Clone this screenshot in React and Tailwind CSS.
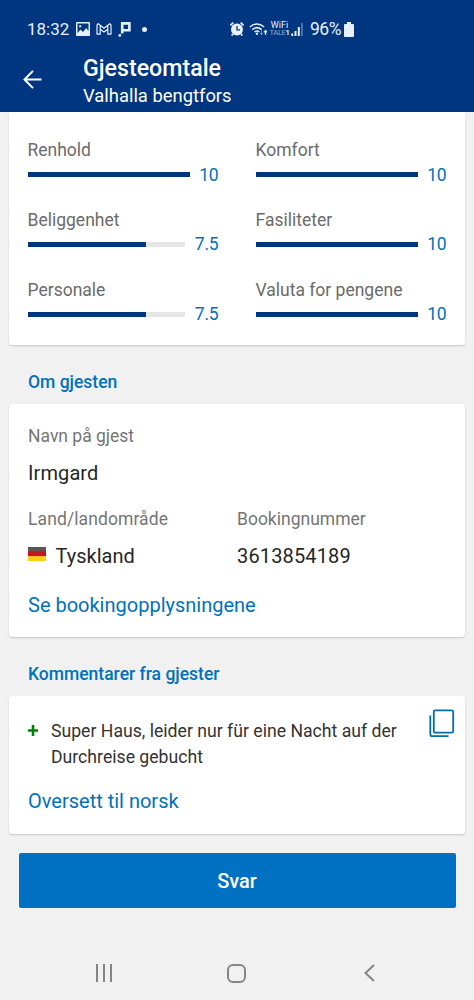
const ratings = [
  ['Renhold', '10', 100],
  ['Komfort', '10', 100],
  ['Beliggenhet', '7.5', 75],
  ['Fasiliteter', '10', 100],
  ['Personale', '7.5', 75],
  ['Valuta for pengene', '10', 100],
];

function StatusBar() {
  return (
    <div className="flex h-[58px] items-center pl-[27px] text-[#e6f0ff]">
      <span className="w-[43px] text-[17px] leading-5 whitespace-nowrap">18:32</span>
      <svg className="ml-[6px] h-[14px] w-[14px] shrink-0" viewBox="0 0 14 14">
        <path fill="currentColor" fillRule="evenodd" d="M1 0H13Q14 0 14 1V13Q14 14 13 14H1Q0 14 0 13V1Q0 0 1 0ZM1.5 1.5V11L4.5 7.5L7 10L10.2 6L12.5 9V1.5ZM3.2 3.2H5.2V5.2H3.2Z" />
      </svg>
      <svg className="ml-[6px] h-3 w-4 shrink-0" viewBox="0 0 16 12" fill="none" stroke="currentColor" strokeWidth="1.2" strokeLinejoin="round">
        <path d="M1 11.2V2.2Q1 .8 2.3 .8L8 5.2L13.7 .8Q15 .8 15 2.2V11.2H11.8V6.3L8 9.1L4.2 6.3V11.2ZM4.2 2.3V6.3M11.8 2.3V6.3" />
      </svg>
      <svg className="ml-[6px] h-[15px] w-[14px] shrink-0" viewBox="0 0 14 15">
        <path d="M4.2 11.5V1.4H11.4V8.2H4.2" fill="none" stroke="currentColor" strokeWidth="2.6" />
        <circle cx="1.8" cy="13.4" r="1.4" fill="currentColor" />
      </svg>
      <span className="ml-[10px] h-[5px] w-[5px] shrink-0 rounded-full bg-current" />
      <svg className="ml-[83px] h-[14px] w-[14px] shrink-0" viewBox="0 0 14 14" fill="none" stroke="currentColor">
        <circle cx="7" cy="7.4" r="6" fill="currentColor" stroke="none" />
        <path d="M.4 3.4L3.3 .6M13.6 3.4L10.7 .6M3 12L1.6 13.6M11 12L12.4 13.6" strokeWidth="1.7" />
        <path d="M7 4V7.8H10" stroke="#003580" strokeWidth="1.3" />
      </svg>
      <svg className="ml-[5px] h-[13px] w-[19px] shrink-0" viewBox="0 0 19 13" fill="none" stroke="currentColor" strokeWidth="1.5">
        <path d="M.8 4Q8 -2 15.2 4M3.3 6.6Q8 2.6 12.7 6.6M5.6 9Q8 7 10.4 9" />
        <circle cx="8" cy="10.8" r="1.2" fill="currentColor" stroke="none" />
        <path d="M12.5 7.5V11.5M11.1 10L12.5 11.6L13.9 10" strokeWidth="1" opacity=".5" />
        <path d="M16.5 12V7.5M14.9 9.3L16.5 7.5L18.1 9.3" strokeWidth="1.2" />
      </svg>
      <span className="ml-[2px] flex w-[19px] flex-col items-center whitespace-nowrap">
        <span className="text-[9px] leading-[8px]">WiFi</span>
        <span className="text-[7.5px] leading-[8px] tracking-[-.3px]"><span className="opacity-60">TALE</span><b>1</b></span>
      </span>
      <svg className="ml-[2px] h-[14px] w-3 shrink-0" viewBox="0 0 12 14" fill="currentColor">
        <path d="M.2 11.5H2.2V14H.2ZM3.5 9H5.5V14H3.5ZM6.8 5H8.8V14H6.8Z" />
        <path d="M10.2 1H11.8V14H10.2Z" opacity=".4" />
      </svg>
      <span className="ml-[7px] w-[32px] text-[17.5px] leading-5 tracking-[-.5px] whitespace-nowrap">96%</span>
      <svg className="ml-[2px] h-[15px] w-[10px] shrink-0" viewBox="0 0 10 15" fill="currentColor">
        <path d="M3 0H7V2H9Q10 2 10 3V14Q10 15 9 15H1Q0 15 0 14V3Q0 2 1 2H3Z" />
      </svg>
    </div>
  );
}

function Rating({ name, score, percent }) {
  return (
    <div className="h-[69.8px]">
      <div className="text-[17.5px] leading-6 text-[#6b6b6b]">{name}</div>
      <div className="flex h-[25px] items-center gap-[9.5px]">
        <div className="h-[5px] flex-1 bg-[#e6e6e6]">
          <div className="h-full bg-[#003580]" style={{ width: percent + '%' }} />
        </div>
        <span className="text-[17.5px] leading-6 tracking-[-.2px] text-[#0071bc]">{score}</span>
      </div>
    </div>
  );
}

const card = 'mx-[9px] rounded-[3px] bg-white shadow-[0_1px_2px_rgba(0,0,0,0.18)]';
const heading = 'pl-[28px] text-[17.5px] font-medium leading-6 text-[#0071bc]';
const label = 'text-[17.5px] leading-6 text-[#757575]';
const value = 'text-[20px] leading-7 text-[#262626]';
const link = 'text-[20px] leading-7 text-[#0071bc]';

export default function App() {
  return (
    <div className="flex h-[1000px] w-[474px] flex-col overflow-hidden bg-[#f1f1f1] font-['Roboto',sans-serif]">
      <header className="h-[112px] shrink-0 bg-[#003580] text-white">
        <StatusBar />
        <div className="flex">
          <svg className="mt-[12px] ml-[23px] h-[19px] w-[19px]" viewBox="0 0 19 19" fill="none" stroke="currentColor" strokeWidth="2">
            <path d="M10 .9L1.5 9.5L10 18.1M1.5 9.5H18.5" />
          </svg>
          <div className="ml-[41px] -mt-[4px]">
            <h1 className="text-[23.2px] font-medium leading-[29px]">Gjesteomtale</h1>
            <p className="text-[18.4px] leading-[26px]">Valhalla bengtfors</p>
          </div>
        </div>
      </header>
      <section className="mx-[9px] h-[233px] shrink-0 rounded-b-[3px] bg-white pt-[26px] pr-[18.5px] pl-[18.5px] shadow-[0_1px_2px_rgba(0,0,0,0.18)]">
        <div className="grid grid-cols-2 gap-x-[37px]">
          {ratings.map(([name, score, percent]) => (
            <Rating key={name} name={name} score={score} percent={percent} />
          ))}
        </div>
      </section>
      <h2 className={heading + ' mt-[25px] mb-[10px]'}>Om gjesten</h2>
      <section className={card + ' h-[233px] shrink-0 pt-[20px] pl-[19px]'}>
        <div className={label}>Navn på gjest</div>
        <div className={value + ' mt-[11px] tracking-[.1px]'}>Irmgard</div>
        <div className="mt-[20px] grid grid-cols-[209px_1fr]">
          <div>
            <div className={label + ' tracking-[.1px]'}>Land/landområde</div>
            <div className={value + ' mt-[11px] flex items-center'}>
              <svg className="mr-[10px] mb-[4px] h-[14px] w-[18px]" viewBox="0 0 18 14">
                <path fill="#5b5558" d="M0 0H18V5H0Z" />
                <path fill="#c9141b" d="M0 4.5H18V9.5H0Z" />
                <path fill="#ffce16" d="M0 9.3H18V14H0Z" />
              </svg>
              <span className="-ml-[.5px]">Tyskland</span>
            </div>
          </div>
          <div>
            <div className={label}>Bookingnummer</div>
            <div className={value + ' mt-[11px] tracking-[.15px]'}>3613854189</div>
          </div>
        </div>
        <div className={link + ' mt-[21px]'}>Se bookingopplysningene</div>
      </section>
      <h2 className={heading + ' mt-[25px] mb-[10px]'}>Kommentarer fra gjester</h2>
      <section className={card + ' h-[138px] shrink-0 pt-[13px] pl-[19px]'}>
        <div className="flex">
          <svg className="mt-[16px] h-[11px] w-[10px]" viewBox="0 0 10 11">
            <path d="M5 0V11M0 5.5H10" stroke="#008009" strokeWidth="2.6" />
          </svg>
          <p className="mt-[9px] ml-[13px] w-[360px] text-[17.65px] leading-[26px] text-[#333]">
            Super Haus, leider nur für eine Nacht auf der Durchreise gebucht
          </p>
          <svg className="ml-[18px] h-[29px] w-[26px]" viewBox="0 0 26 29" fill="none" stroke="#0071a8" strokeWidth="1.8">
            <rect x="4.8" y="1.3" width="19.4" height="22.4" rx="1.5" />
            <path d="M1.3 6.5V25.2Q1.3 27.2 3.3 27.2H19.5" />
          </svg>
        </div>
        <div className={link + ' mt-[17px]'}>Oversett til norsk</div>
      </section>
      <button className="mx-[18.5px] mt-[19px] h-[55px] shrink-0 rounded-[2px] bg-[#0071c2] pt-px text-[20px] font-medium text-white">
        Svar
      </button>
      <nav className="mt-[55px] flex h-5 shrink-0 items-center text-[#858585]">
        <svg className="ml-[95px] h-[18px] w-[18px]" viewBox="0 0 18 18" stroke="currentColor" strokeWidth="2">
          <path d="M2 0V18M9 0V18M16 0V18" />
        </svg>
        <svg className="ml-[114px] h-[19px] w-[19px]" viewBox="0 0 19 19" fill="none" stroke="currentColor" strokeWidth="2">
          <rect x="1" y="1" width="17" height="17" rx="5" />
        </svg>
        <svg className="ml-[118px] h-[18px] w-[11px]" viewBox="0 0 11 18" fill="none" stroke="currentColor" strokeWidth="2">
          <path d="M10 1L1.5 9L10 17" />
        </svg>
      </nav>
    </div>
  );
}
